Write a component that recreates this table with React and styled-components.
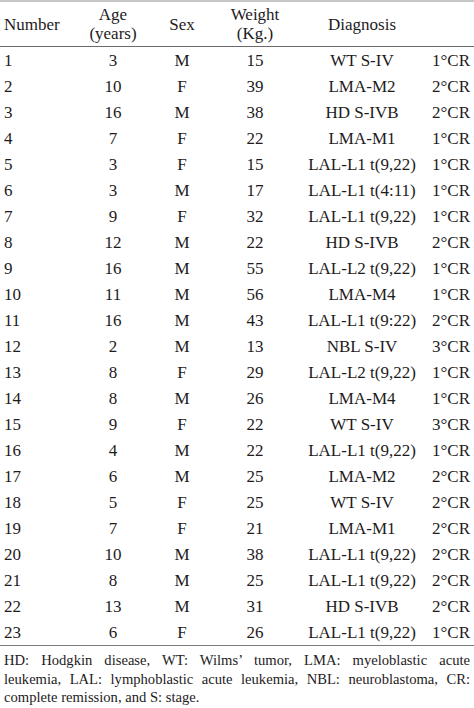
import React from "react";
import styled, { createGlobalStyle } from "styled-components";

const Global = createGlobalStyle`
  html, body { margin: 0; padding: 0; background: #fff; }
  body { width: 474px; }
`;

const Page = styled.div`
  width: 474px;
  font-family: "Liberation Serif", "Times New Roman", serif;
  color: #1e1b1c;
  border-top: 2px solid #c8c8c8;
`;

const cols = "80px 66px 72px 74px 140px 42px";

const HeaderRow = styled.div`
  display: grid;
  grid-template-columns: ${cols};
  height: 44px;
  border-bottom: 1px solid #6a6a6a;
  align-items: center;
  font-size: 17px;
  line-height: 19px;
`;

const Row = styled.div`
  display: grid;
  grid-template-columns: ${cols};
  height: 26px;
  align-items: center;
  font-size: 17px;
  line-height: 20px;
`;

const Body = styled.div`
  border-bottom: 1.5px solid #7a7a7a;
`;

const Cell = styled.div`
  text-align: ${(p) => p.$align || "center"};
  padding-left: ${(p) => (p.$align === "left" ? "4px" : "0")};
  padding-right: ${(p) => (p.$align === "right" ? "5px" : "0")};
  white-space: nowrap;
  padding-top: ${(p) => (p.$head ? "0" : "2px")};
`;

const Note = styled.div`
  padding: 5px 4px 0 4px;
  font-size: 14.6px;
  line-height: 18.5px;
`;

const NoteLine = styled.div`
  text-align: justify;
  text-align-last: ${(p) => (p.$last ? "left" : "justify")};
  white-space: nowrap;
`;

const data = [
  [1, 3, "M", 15, "WT S-IV", "1"],
  [2, 10, "F", 39, "LMA-M2", "2"],
  [3, 16, "M", 38, "HD S-IVB", "2"],
  [4, 7, "F", 22, "LMA-M1", "1"],
  [5, 3, "F", 15, "LAL-L1 t(9,22)", "1"],
  [6, 3, "M", 17, "LAL-L1 t(4:11)", "1"],
  [7, 9, "F", 32, "LAL-L1 t(9,22)", "1"],
  [8, 12, "M", 22, "HD S-IVB", "2"],
  [9, 16, "M", 55, "LAL-L2 t(9,22)", "1"],
  [10, 11, "M", 56, "LMA-M4", "1"],
  [11, 16, "M", 43, "LAL-L1 t(9:22)", "2"],
  [12, 2, "M", 13, "NBL S-IV", "3"],
  [13, 8, "F", 29, "LAL-L2 t(9,22)", "1"],
  [14, 8, "M", 26, "LMA-M4", "1"],
  [15, 9, "F", 22, "WT S-IV", "3"],
  [16, 4, "M", 22, "LAL-L1 t(9,22)", "1"],
  [17, 6, "M", 25, "LMA-M2", "2"],
  [18, 5, "F", 25, "WT S-IV", "2"],
  [19, 7, "F", 21, "LMA-M1", "2"],
  [20, 10, "M", 38, "LAL-L1 t(9,22)", "2"],
  [21, 8, "M", 25, "LAL-L1 t(9,22)", "2"],
  [22, 13, "M", 31, "HD S-IVB", "2"],
  [23, 6, "F", 26, "LAL-L1 t(9,22)", "1"],
];

export default function App() {
  return (
    <Page>
      <Global />
      <HeaderRow>
        <Cell $align="left" $head>Number</Cell>
        <Cell $head>Age<br />(years)</Cell>
        <Cell $head>Sex</Cell>
        <Cell $head>Weight<br />(Kg.)</Cell>
        <Cell $head>Diagnosis</Cell>
        <Cell $head></Cell>
      </HeaderRow>
      <Body>
        {data.map((r) => (
          <Row key={r[0]}>
            <Cell $align="left">{r[0]}</Cell>
            <Cell>{r[1]}</Cell>
            <Cell>{r[2]}</Cell>
            <Cell>{r[3]}</Cell>
            <Cell>{r[4]}</Cell>
            <Cell $align="right">{r[5]}°CR</Cell>
          </Row>
        ))}
      </Body>
      <Note>
        <NoteLine>HD: Hodgkin disease, WT: Wilms’ tumor, LMA: myeloblastic acute</NoteLine>
        <NoteLine>leukemia, LAL: lymphoblastic acute leukemia, NBL: neuroblastoma, CR:</NoteLine>
        <NoteLine $last>complete remission, and S: stage.</NoteLine>
      </Note>
    </Page>
  );
}
